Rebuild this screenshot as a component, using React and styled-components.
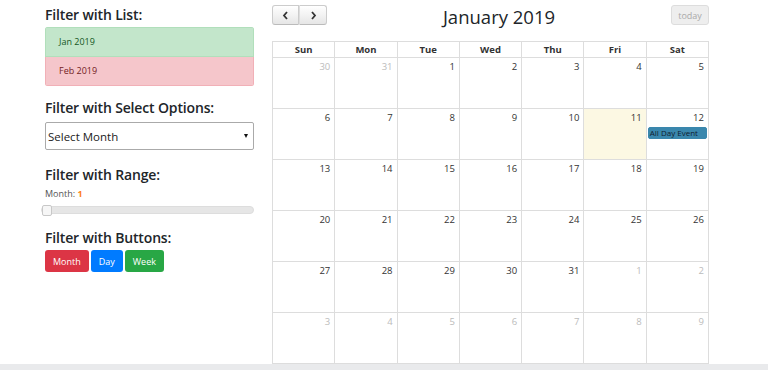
import React from "react";
import styled, { createGlobalStyle } from "styled-components";

const GlobalStyle = createGlobalStyle`
  *, *::before, *::after {
    box-sizing: border-box;
  }
  html, body {
    margin: 0;
    padding: 0;
    background: #fff;
    font-family: "Open Sans", "Noto Sans", sans-serif;
    color: #212529;
  }
`;

const weeks = [
  [30, 31, 1, 2, 3, 4, 5],
  [6, 7, 8, 9, 10, 11, 12],
  [13, 14, 15, 16, 17, 18, 19],
  [20, 21, 22, 23, 24, 25, 26],
  [27, 28, 29, 30, 31, 1, 2],
  [3, 4, 5, 6, 7, 8, 9],
];
const dayNames = ["Sun", "Mon", "Tue", "Wed", "Thu", "Fri", "Sat"];

function Chevron({ dir }) {
  const d = dir === "left" ? "M5 1 L2 4.5 L5 8" : "M2 1 L5 4.5 L2 8";
  return (
    <svg width="7" height="9" viewBox="0 0 7 9">
      <path d={d} fill="none" stroke="#333" strokeWidth="1.8" />
    </svg>
  );
}

function App() {
  return (
    <Page>
      <GlobalStyle />
      <Main>
        <Sidebar>
          <Section>
            <Heading>Filter with List:</Heading>
            <ListGroup>
              <ListItem variant="success">Jan 2019</ListItem>
              <ListItem variant="danger">Feb 2019</ListItem>
            </ListGroup>
          </Section>

          <Section space={12}>
            <Heading>Filter with Select Options:</Heading>
            <SelectWrap>
              <Select defaultValue="">
                <option value="">Select Month</option>
              </Select>
              <Caret />
            </SelectWrap>
          </Section>

          <Section space={15}>
            <Heading>Filter with Range:</Heading>
            <RangeLabel>
              Month: <RangeValue>1</RangeValue>
            </RangeLabel>
            <Range type="range" min="1" max="12" defaultValue="1" />
          </Section>

          <Section space={14}>
            <Heading>Filter with Buttons:</Heading>
            <ButtonRow>
              <FilterButton color="#dc3545">Month</FilterButton>
              <FilterButton color="#007bff">Day</FilterButton>
              <FilterButton color="#28a745">Week</FilterButton>
            </ButtonRow>
          </Section>
        </Sidebar>

        <Calendar>
          <Toolbar>
            <NavGroup>
              <NavButton>
                <Chevron dir="left" />
              </NavButton>
              <NavButton>
                <Chevron dir="right" />
              </NavButton>
            </NavGroup>
            <Title>January 2019</Title>
            <TodayButton disabled>today</TodayButton>
          </Toolbar>
          <Grid>
            {dayNames.map((d) => (
              <HeadCell key={d}>{d}</HeadCell>
            ))}
            {weeks.map((week, wi) =>
              week.map((n, di) => {
                const other = (wi === 0 && n > 20) || (wi >= 4 && n < 10);
                const today = wi === 1 && n === 11;
                return (
                  <DayCell key={`${wi}-${di}`} today={today}>
                    <DayNum other={other}>{n}</DayNum>
                    {wi === 1 && n === 12 && <Event>All Day Event</Event>}
                  </DayCell>
                );
              })
            )}
          </Grid>
        </Calendar>
      </Main>
      <BottomBar />
    </Page>
  );
}

const Page = styled.div`
  width: 768px;
  height: 370px;
  display: flex;
  flex-direction: column;
  overflow: hidden;
`;

const Main = styled.div`
  flex: 1;
  display: flex;
  gap: 18px;
  padding-left: 45px;
  padding-top: 5px;
`;

const Sidebar = styled.div`
  width: 209px;
  display: flex;
  flex-direction: column;
`;

const Section = styled.div`
  display: flex;
  flex-direction: column;
  margin-top: ${(p) => p.space || 0}px;
`;

const Heading = styled.h3`
  margin: 0 0 2px 0;
  font-family: "Open Sans", "Noto Sans", sans-serif;
  font-size: 14px;
  font-weight: 600;
  letter-spacing: -0.15px;
  line-height: 20px;
  color: #212529;
`;

const ListGroup = styled.div`
  display: flex;
  flex-direction: column;
  border-radius: 3px;
  overflow: hidden;
`;

const ListItem = styled.div`
  height: 29.5px;
  display: flex;
  align-items: center;
  padding-left: 13px;
  font-size: 9px;
  background: ${(p) => (p.variant === "success" ? "#c3e6cb" : "#f5c6cb")};
  color: ${(p) => (p.variant === "success" ? "#155724" : "#721c24")};
  border: 1px solid ${(p) => (p.variant === "success" ? "#b1dfbb" : "#f1b0b7")};
  & + & {
    border-top: none;
  }
`;

const SelectWrap = styled.div`
  position: relative;
  height: 28px;
  margin-top: 2px;
`;

const Select = styled.select`
  appearance: none;
  width: 100%;
  height: 100%;
  border: 1px solid #aaa;
  border-radius: 2px;
  background: #fff;
  font-family: "Open Sans", "Noto Sans", sans-serif;
  font-size: 11.5px;
  color: #222;
  padding: 0 2px;
  outline: none;
`;

const Caret = styled.span`
  position: absolute;
  right: 6px;
  top: 12px;
  width: 0;
  height: 0;
  border-left: 2.5px solid transparent;
  border-right: 2.5px solid transparent;
  border-top: 4px solid #111;
  pointer-events: none;
`;

const RangeLabel = styled.div`
  font-size: 9px;
  line-height: 12px;
  color: #555;
  margin-top: 1px;
`;

const RangeValue = styled.span`
  color: #fd7e14;
  font-weight: 700;
`;

const Range = styled.input`
  -webkit-appearance: none;
  appearance: none;
  width: 213px;
  margin: 6px 0 0 -4px;
  height: 8px;
  background: #e6e6e6;
  border: 1px solid #ddd;
  border-radius: 4px;
  outline: none;
  &::-webkit-slider-thumb {
    -webkit-appearance: none;
    width: 10px;
    height: 11px;
    background: #f6f6f6;
    border: 1px solid #c8c8c8;
    border-radius: 2px;
  }
`;

const ButtonRow = styled.div`
  display: flex;
  gap: 2px;
`;

const FilterButton = styled.button`
  height: 22px;
  padding: 0 8px;
  border: none;
  border-radius: 3px;
  background: ${(p) => p.color};
  color: #fff;
  font-family: "Open Sans", "Noto Sans", sans-serif;
  font-size: 9px;
  cursor: pointer;
`;

const Calendar = styled.div`
  width: 437px;
  display: flex;
  flex-direction: column;
`;

const Toolbar = styled.div`
  display: flex;
  align-items: center;
  height: 20px;
  margin-bottom: 16px;
`;

const NavGroup = styled.div`
  display: flex;
`;

const NavButton = styled.button`
  width: 27px;
  height: 20px;
  display: flex;
  align-items: center;
  justify-content: center;
  padding: 0;
  border: 1px solid #ccc;
  border-bottom-color: #bbb;
  background: linear-gradient(#fff, #e6e6e6);
  &:first-child {
    border-radius: 3px 0 0 3px;
  }
  & + & {
    border-left: 1px solid #ddd;
    width: 28px;
    border-radius: 0 3px 3px 0;
  }
`;

const Title = styled.h2`
  flex: 1;
  text-align: center;
  margin: 0;
  font-size: 18.5px;
  font-weight: 500;
  color: #212529;
  line-height: 20px;
  transform: translateY(2px);
`;

const TodayButton = styled.button`
  width: 38px;
  height: 20px;
  padding: 0;
  border: 1px solid #ddd;
  border-radius: 3px;
  background: #eee;
  color: #aaa;
  font-family: "Open Sans", "Noto Sans", sans-serif;
  font-size: 9px;
`;

const Grid = styled.div`
  display: grid;
  grid-template-columns: repeat(7, 1fr);
  grid-template-rows: 16px repeat(6, 51px);
  border-top: 1px solid #ddd;
  border-left: 1px solid #ddd;
`;

const HeadCell = styled.div`
  border-right: 1px solid #ddd;
  border-bottom: 1px solid #ddd;
  display: flex;
  align-items: center;
  justify-content: center;
  font-size: 9.5px;
  font-weight: 700;
  color: #333;
`;

const DayCell = styled.div`
  border-right: 1px solid #ddd;
  border-bottom: 1px solid #ddd;
  background: ${(p) => (p.today ? "#fcf8e3" : "#fff")};
  display: flex;
  flex-direction: column;
  align-items: stretch;
  padding-top: 2px;
`;

const DayNum = styled.div`
  text-align: right;
  padding-right: 4px;
  font-size: 9.5px;
  line-height: 14px;
  color: ${(p) => (p.other ? "#bbb" : "#333")};
`;

const Event = styled.div`
  margin: 2px 1px 0 1px;
  height: 12px;
  line-height: 10px;
  background: #3a87ad;
  border: 1px solid #3a87ad;
  border-radius: 2px;
  font-size: 8px;
  color: #102030;
  padding-left: 1px;
  white-space: nowrap;
  overflow: hidden;
`;

const BottomBar = styled.div`
  height: 6px;
  background: #e9eaec;
  flex-shrink: 0;
`;

export default App;
